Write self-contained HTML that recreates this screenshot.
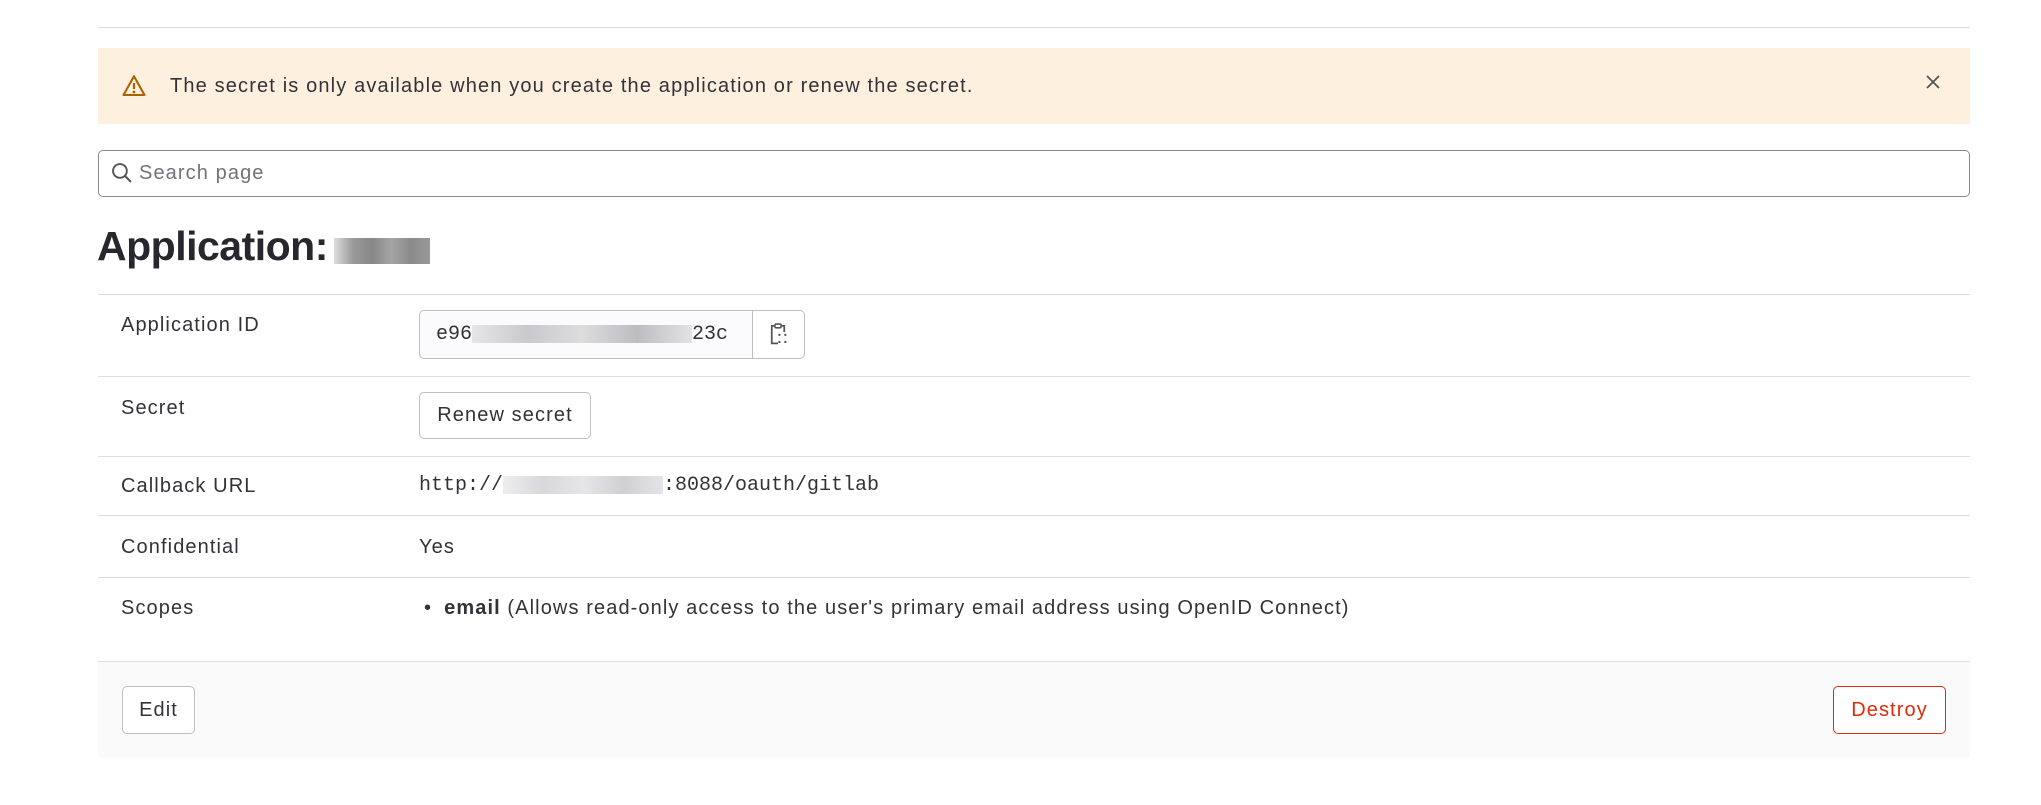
<!DOCTYPE html>
<html><head><meta charset="utf-8"><style>
*{box-sizing:border-box;margin:0;padding:0}
body{width:2041px;height:805px;background:#fff;font-family:"Liberation Sans",sans-serif;color:#333238;font-size:20px;letter-spacing:1.1px;position:relative;overflow:hidden}
.abs{position:absolute}
.hl{position:absolute;left:98px;width:1872px;height:1px;background:#dcdcde}
.lbl{position:absolute;left:121px;font-size:20px;line-height:24px}
.val{position:absolute;left:419px;font-size:20px;line-height:24px}
.mono{font-family:"Liberation Mono",monospace;font-size:20px;letter-spacing:0}
.btn{position:absolute;border:1px solid #bfbfc3;border-radius:5px;background:#fff;font-size:20px;display:flex;align-items:center;justify-content:center}
.blur{display:inline-block;background:linear-gradient(90deg,#e6e6ea,#c9c9ce,#ddd,#bcbcc2,#e2e2e6);height:18px;vertical-align:middle}
</style></head><body>
<div class="hl" style="top:27px"></div>
<div class="abs" style="left:98px;top:48px;width:1872px;height:76px;background:#fdf0de"></div>
<svg class="abs" style="left:122px;top:74px" width="24" height="24" viewBox="0 0 16 16"><path d="M8 1.5L1 14h14z" fill="none" stroke="#ab6100" stroke-width="1.4" stroke-linejoin="round"/><path d="M8 6v4" stroke="#ab6100" stroke-width="1.5"/><circle cx="8" cy="12" r="0.9" fill="#ab6100"/></svg>
<div class="abs" style="left:170px;top:74px;font-size:20px;letter-spacing:1.15px;line-height:24px">The secret is only available when you create the application or renew the secret.</div>
<svg class="abs" style="left:1924px;top:73px" width="18" height="18" viewBox="0 0 18 18"><path d="M3 3L15 15M15 3L3 15" stroke="#555" stroke-width="1.8"/></svg>
<div class="abs" style="left:98px;top:150px;width:1872px;height:47px;border:1px solid #89888d;border-radius:5px"></div>
<svg class="abs" style="left:111px;top:162px" width="22" height="22" viewBox="0 0 16 16"><circle cx="6.5" cy="6.5" r="5" fill="none" stroke="#555" stroke-width="1.4"/><path d="M10.2 10.2L14.5 14.5" stroke="#555" stroke-width="1.5"/></svg>
<div class="abs" style="left:139px;top:162px;font-size:20px;color:#737278">Search page</div>
<div class="abs" style="left:97px;top:223px;font-size:41px;font-weight:bold;letter-spacing:-0.5px;color:#28272d">Application:</div>
<div class="abs" style="left:334px;top:238px;width:96px;height:26px;background:linear-gradient(90deg,#ddd,#999,#888,#a5a5a5,#8b8b8b,#999)"></div>
<div class="hl" style="top:294px"></div>
<div class="lbl" style="top:313px">Application ID</div>
<div class="abs" style="left:419px;top:310px;width:386px;height:49px;border:1px solid #bfbfc3;border-radius:5px;background:#fbfafd"></div>
<div class="abs" style="left:752px;top:311px;width:52px;height:47px;background:#fff;border-left:1px solid #bfbfc3;border-radius:0 5px 5px 0"></div>
<svg class="abs" style="left:768px;top:322px" width="20" height="24" viewBox="0 0 16 19"><path d="M5 3H3v14h5M11 3h2v5" fill="none" stroke="#555" stroke-width="1.4"/><rect x="5.5" y="1.5" width="5" height="3" rx="1" fill="none" stroke="#555" stroke-width="1.3"/><path d="M9 11v-1h1M13 10h1v1M14 15v1h-1M10 16h-1v-1" fill="none" stroke="#555" stroke-width="1.3"/></svg>
<div class="val mono" style="left:436px;top:323px">e96<span class="blur" style="width:220px"></span>23c</div>
<div class="hl" style="top:376px"></div>
<div class="lbl" style="top:396px">Secret</div>
<div class="btn" style="left:419px;top:392px;width:172px;height:47px">Renew secret</div>
<div class="hl" style="top:456px"></div>
<div class="lbl" style="top:474px">Callback URL</div>
<div class="val mono" style="top:474px">http://<span class="blur" style="width:160px;background:linear-gradient(90deg,#eee,#d8d8dc,#e6e6e8,#d0d0d4,#e4e4e8)"></span>:8088/oauth/gitlab</div>
<div class="hl" style="top:515px"></div>
<div class="lbl" style="top:535px">Confidential</div>
<div class="val" style="top:535px">Yes</div>
<div class="hl" style="top:577px"></div>
<div class="lbl" style="top:596px">Scopes</div>
<div class="val" style="top:596px;left:424px"><span style="margin-right:12px">•</span><b>email</b> (Allows read-only access to the user's primary email address using OpenID Connect)</div>
<div class="abs" style="left:98px;top:661px;width:1872px;height:97px;background:#fafafb;border-top:1px solid #dcdcde"></div>
<div class="btn" style="left:122px;top:686px;width:73px;height:48px">Edit</div>
<div class="btn" style="left:1833px;top:686px;width:113px;height:48px;border-color:#dd2b0e;color:#dd2b0e">Destroy</div>
</body></html>
